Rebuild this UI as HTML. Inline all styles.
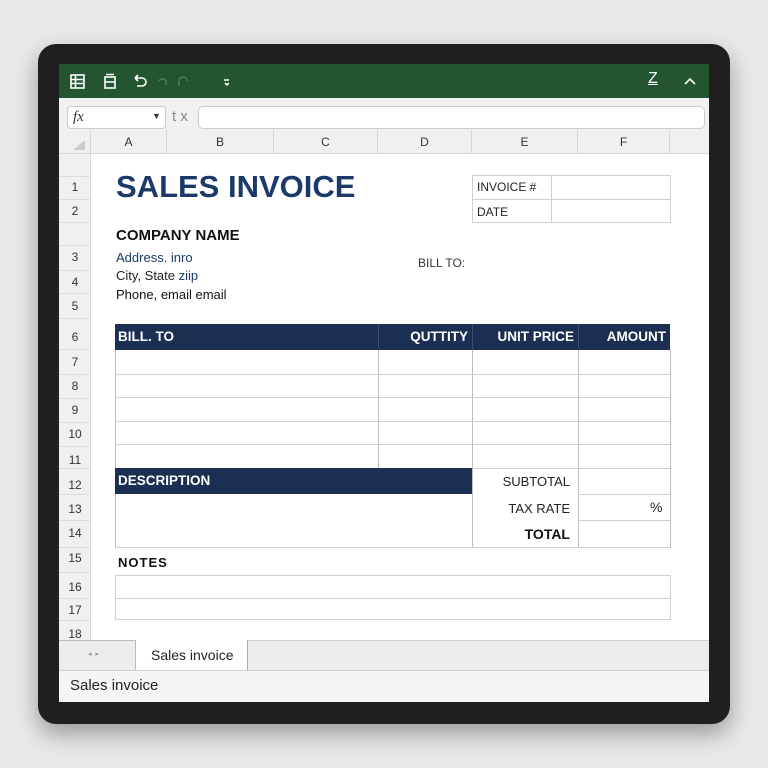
<!DOCTYPE html>
<html><head><meta charset="utf-8"><style>
*{box-sizing:border-box;margin:0;padding:0}
body{width:768px;height:768px;background:#e9e9e9;font-family:"Liberation Sans",sans-serif;position:relative;overflow:hidden}
.a{position:absolute}
.dev{left:38px;top:44px;width:692px;height:680px;background:#1f1f1f;border-radius:18px;box-shadow:0 10px 24px rgba(0,0,0,.35)}
.scr{left:59px;top:64px;width:650px;height:638px;background:#fff;overflow:hidden}
.t{position:absolute;white-space:nowrap}
.hl{position:absolute;height:1px;background:#cfcfcf}
.vl{position:absolute;width:1px;background:#bdbdbd}
.rn{position:absolute;left:0;width:32px;text-align:center;font-size:12px;color:#333}
.rl{position:absolute;left:0;width:32px;height:1px;background:#dcdcdc}
.ch{position:absolute;top:66px;height:24px;line-height:24px;text-align:center;font-size:12px;color:#333;border-right:1px solid #d6d6d6}
.hd{background:#1b2f52;color:#fff;font-weight:bold;font-size:14px}
.hh{font-size:13.5px;font-weight:bold;color:#fff}
</style></head><body>
<div class="a dev"></div>
<div class="a scr">
 <div class="a" style="left:0;top:0;width:650px;height:34px;background:#225530"></div>
 <svg class="a" style="left:10px;top:9px" width="160" height="18" viewBox="0 0 160 18" fill="none" stroke="#fff" stroke-width="1.6">
  <rect x="2" y="2" width="13" height="13"/><path d="M2 6.5H15M2 10.5H15M6.5 2V15"/>
  <rect x="36" y="4" width="10" height="11"/><path d="M36 9H46M37 1.5H45"/>
  <path d="M66 5h7a4 4 0 0 1 0 8h-5M66 5l3-3M66 5l3 3"/>
  <path d="M90 8a4 4 0 0 1 7 0v4M110 13V8a4 4 0 0 1 8 0" stroke="#4d7a57"/>
  <path d="M155 7h5M156 10l2 2 2-2"/>
 </svg>
 <div class="t" style="left:589px;top:6px;color:#fff;font-size:16px;text-decoration:underline">Z</div>
 <svg class="a" style="left:625px;top:12px" width="12" height="10" fill="none" stroke="#fff" stroke-width="1.6"><path d="M1 8l5-5 5 5"/></svg>
 <div class="a" style="left:0;top:34px;width:650px;height:32px;background:#f1f1f1"></div>
 <div class="a" style="left:8px;top:42px;width:99px;height:23px;background:#fff;border:1px solid #ccc;border-radius:4px"></div>
 <div class="t" style="left:14px;top:45px;font-family:'Liberation Serif',serif;font-style:italic;font-size:15px;color:#333">fx</div>
 <div class="t" style="left:93px;top:47px;font-size:9px;color:#333">▼</div>
 <div class="t" style="left:113px;top:44px;font-size:15px;color:#888">t x</div>
 <div class="a" style="left:139px;top:42px;width:507px;height:23px;background:#fff;border:1px solid #ccc;border-radius:5px"></div>
 <div class="a" style="left:0;top:66px;width:650px;height:24px;background:#f0f0f0;border-bottom:1px solid #d6d6d6"></div>
 <div class="ch" style="left:0;width:32px"></div>
 <svg class="a" style="left:14px;top:76px" width="12" height="10"><path d="M12 0V10H0Z" fill="#ccc"/></svg>
 <div class="ch" style="left:32px;width:76px">A</div>
 <div class="ch" style="left:108px;width:107px">B</div>
 <div class="ch" style="left:215px;width:104px">C</div>
 <div class="ch" style="left:319px;width:94px">D</div>
 <div class="ch" style="left:413px;width:106px">E</div>
 <div class="ch" style="left:519px;width:92px">F</div>
 <div class="a" style="left:0;top:90px;width:32px;height:548px;background:#f0f0f0;border-right:1px solid #d6d6d6"></div>
 <div class="rl" style="top:112px"></div><div class="rl" style="top:135px"></div><div class="rl" style="top:158px"></div>
 <div class="rl" style="top:181px"></div><div class="rl" style="top:206px"></div><div class="rl" style="top:229px"></div>
 <div class="rl" style="top:254px"></div><div class="rl" style="top:285px"></div><div class="rl" style="top:310px"></div>
 <div class="rl" style="top:334px"></div><div class="rl" style="top:358px"></div><div class="rl" style="top:382px"></div>
 <div class="rl" style="top:404px"></div><div class="rl" style="top:430px"></div><div class="rl" style="top:456px"></div>
 <div class="rl" style="top:483px"></div><div class="rl" style="top:508px"></div><div class="rl" style="top:534px"></div>
 <div class="rl" style="top:556px"></div>
 <div class="rn" style="top:116px">1</div><div class="rn" style="top:140px">2</div>
 <div class="rn" style="top:186px">3</div><div class="rn" style="top:211px">4</div>
 <div class="rn" style="top:235px">5</div><div class="rn" style="top:266px">6</div>
 <div class="rn" style="top:291px">7</div><div class="rn" style="top:315px">8</div>
 <div class="rn" style="top:339px">9</div><div class="rn" style="top:363px">10</div>
 <div class="rn" style="top:389px">11</div><div class="rn" style="top:414px">12</div>
 <div class="rn" style="top:438px">13</div><div class="rn" style="top:462px">14</div>
 <div class="rn" style="top:487px">15</div><div class="rn" style="top:516px">16</div>
 <div class="rn" style="top:539px">17</div><div class="rn" style="top:563px">18</div>
 <div class="t" style="left:57px;top:105px;font-size:31px;font-weight:bold;color:#1b3a6b">SALES INVOICE</div>
 <div class="a" style="left:413px;top:111px;width:199px;height:48px;border:1px solid #cfcfcf"></div>
 <div class="vl" style="left:492px;top:111px;height:48px;background:#cfcfcf"></div>
 <div class="hl" style="left:413px;top:135px;width:199px"></div>
 <div class="t" style="left:418px;top:116px;font-size:12px;color:#222">INVOICE #</div>
 <div class="t" style="left:418px;top:141px;font-size:12px;color:#222">DATE</div>
 <div class="t" style="left:57px;top:163px;font-size:15px;font-weight:bold;color:#111">COMPANY NAME</div>
 <div class="t" style="left:57px;top:186px;font-size:13px;color:#1b3a6b">Address. inro</div>
 <div class="t" style="left:57px;top:204px;font-size:13px;color:#222">City, State <span style="color:#1b3a6b">ziip</span></div>
 <div class="t" style="left:57px;top:223px;font-size:13px;color:#111">Phone, email email</div>
 <div class="t" style="left:359px;top:192px;font-size:12px;color:#333">BILL TO:</div>
 <div class="a hd" style="left:56px;top:260px;width:555px;height:26px"></div>
 <div class="t hh" style="left:59px;top:265px">BILL. TO</div>
 <div class="t hh" style="left:319px;width:90px;text-align:right;top:265px">QUTTITY</div>
 <div class="t hh" style="left:413px;width:102px;text-align:right;top:265px">UNIT PRICE</div>
 <div class="t hh" style="left:519px;width:88px;text-align:right;top:265px">AMOUNT</div>
 <div class="vl" style="left:319px;top:260px;height:26px;background:#3a4d6d"></div>
 <div class="vl" style="left:413px;top:260px;height:26px;background:#3a4d6d"></div>
 <div class="vl" style="left:519px;top:260px;height:26px;background:#3a4d6d"></div>
 <div class="vl" style="left:56px;top:286px;height:118px"></div>
 <div class="vl" style="left:319px;top:286px;height:118px"></div>
 <div class="vl" style="left:413px;top:286px;height:197px"></div>
 <div class="vl" style="left:519px;top:286px;height:197px"></div>
 <div class="vl" style="left:611px;top:286px;height:197px"></div>
 <div class="hl" style="left:56px;top:310px;width:555px"></div>
 <div class="hl" style="left:56px;top:333px;width:555px"></div>
 <div class="hl" style="left:56px;top:357px;width:555px"></div>
 <div class="hl" style="left:56px;top:380px;width:555px"></div>
 <div class="hl" style="left:413px;top:404px;width:198px"></div>
 <div class="a hd" style="left:56px;top:404px;width:357px;height:26px"></div>
 <div class="t hh" style="left:59px;top:409px">DESCRIPTION</div>
 <div class="vl" style="left:56px;top:430px;height:53px"></div>
 <div class="hl" style="left:56px;top:483px;width:556px"></div>
 <div class="hl" style="left:519px;top:430px;width:92px"></div>
 <div class="hl" style="left:519px;top:456px;width:92px"></div>
 <div class="t" style="left:413px;top:410px;width:98px;text-align:right;font-size:13px;color:#222">SUBTOTAL</div>
 <div class="t" style="left:413px;top:437px;width:98px;text-align:right;font-size:13px;color:#222">TAX RATE</div>
 <div class="t" style="left:413px;top:462px;width:98px;text-align:right;font-size:14px;font-weight:bold;color:#111">TOTAL</div>
 <div class="t" style="left:591px;top:435px;font-size:14px;color:#222">%</div>
 <div class="t" style="left:59px;top:491px;font-size:13px;font-weight:bold;color:#111;letter-spacing:1px">NOTES</div>
 <div class="a" style="left:56px;top:511px;width:556px;height:45px;border:1px solid #cfcfcf"></div>
 <div class="hl" style="left:56px;top:534px;width:556px"></div>
 <div class="a" style="left:0;top:576px;width:650px;height:30px;background:#ececec;border-top:1px solid #cfcfcf"></div>
 <div class="a" style="left:0;top:576px;width:77px;height:30px;border-right:1px solid #bbb;border-top:1px solid #bbb"></div>
 <div class="t" style="left:29px;top:586px;font-size:7px;color:#999">◂ &nbsp;▸</div>
 <div class="a" style="left:77px;top:576px;width:112px;height:31px;background:#fff;border-right:1px solid #aaa"></div>
 <div class="t" style="left:92px;top:583px;font-size:14px;color:#222">Sales invoice</div>
 <div class="a" style="left:0;top:606px;width:650px;height:32px;background:#f5f5f5;border-top:1px solid #cfcfcf"></div>
 <div class="t" style="left:11px;top:613px;font-size:15px;color:#222">Sales invoice</div>
</div>
</body></html>
